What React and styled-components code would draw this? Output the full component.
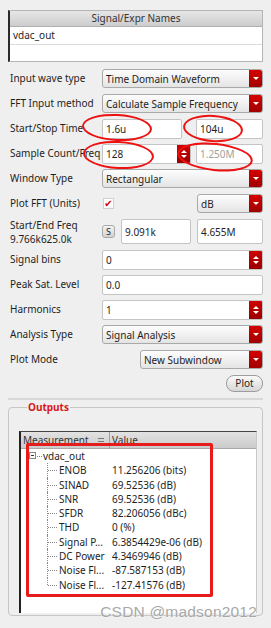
import styled, { createGlobalStyle } from 'styled-components';

const GlobalStyle = createGlobalStyle`
  body {
    margin: 0;
    background: #efefef;
    font-family: "Noto Sans", "DejaVu Sans", sans-serif;
    font-size: 10px;
    color: #1e1e1e;
  }
`;

const Page = styled.div`
  position: relative;
  width: 271px;
  height: 628px;
  box-sizing: border-box;
  padding: 10px 8px 0;
  overflow: hidden;
`;

const NamesPanel = styled.div`
  height: 52px;
  box-sizing: border-box;
  background: #fff;
  border: 1px solid #b5b5b5;
  border-left: 2px solid #2a2a2a;
`;

const NamesHeader = styled.div`
  height: 15px;
  line-height: 15px;
  text-align: center;
  background: linear-gradient(#e6e6e6, #cdcdcd);
  border-bottom: 1px solid #b0b0b0;
  color: #333;
`;

const NameRow = styled.div`
  height: 17px;
  line-height: 17px;
  padding-left: 3px;
  border-bottom: 1px solid #dcdcdc;
`;

const Form = styled.div`
  margin-top: 4px;
  display: flex;
  flex-direction: column;
`;

const Row = styled.div`
  display: grid;
  grid-template-columns: 94px 1fr;
  align-items: center;
  height: ${p => p.$h || 25}px;
`;

const Label = styled.div`
  padding-left: 2px;
  line-height: 19px;
  white-space: nowrap;
`;

const Combo = styled.div`
  height: 19px;
  margin-left: ${p => p.$offset || 0}px;
  box-sizing: border-box;
  display: flex;
  align-items: center;
  padding-left: 3px;
  border: 1px solid #a9a9a9;
  border-radius: 3px;
  background: linear-gradient(#fdfdfd, #e4e4e4);
  overflow: hidden;
  white-space: nowrap;
`;

const Arrow = styled.span`
  margin-left: auto;
  align-self: stretch;
  width: 13px;
  flex: none;
  display: flex;
  align-items: center;
  justify-content: center;
  background: linear-gradient(#d60000, #9e0000);
  &::after {
    content: '';
    border-left: 3px solid transparent;
    border-right: 3px solid transparent;
    border-top: 3px solid #fff;
  }
`;

const Input = styled.div`
  height: 20px;
  box-sizing: border-box;
  display: flex;
  align-items: center;
  padding-left: 3px;
  background: #fff;
  border: 1px solid #c4c4c4;
  border-radius: 2px;
  color: ${p => (p.$disabled ? '#a0a0a0' : '#1e1e1e')};
  overflow: hidden;
  white-space: nowrap;
`;

const Spinner = styled.span`
  margin-left: auto;
  align-self: stretch;
  width: 13px;
  flex: none;
  display: flex;
  flex-direction: column;
  align-items: center;
  justify-content: center;
  gap: 2px;
  background: linear-gradient(#d00000, #9a0000);
  &::before {
    content: '';
    border-left: 3px solid transparent;
    border-right: 3px solid transparent;
    border-bottom: 3px solid #fff;
  }
  &::after {
    content: '';
    border-left: 3px solid transparent;
    border-right: 3px solid transparent;
    border-top: 3px solid #fff;
  }
`;

const Pair = styled.div`
  display: grid;
  grid-template-columns: ${p => p.$cols};
  column-gap: ${p => p.$gap}px;
  align-items: center;
`;

const CheckBox = styled.span`
  width: 9px;
  height: 9px;
  margin-left: 1px;
  border: 1px solid #cfcfcf;
  background: #fff;
  color: #d00000;
  font-size: 10px;
  line-height: 8px;
  font-weight: bold;
  display: flex;
  justify-content: center;
`;

const SmallButton = styled.span`
  width: 13px;
  height: 13px;
  box-sizing: border-box;
  display: flex;
  align-items: center;
  justify-content: center;
  border: 1px solid #a8a8a8;
  border-radius: 3px;
  background: linear-gradient(#f4f4f4, #d2d2d2);
  font-size: 9px;
`;

const FreqFields = styled.div`
  display: flex;
  align-items: center;
  gap: 6px;
  & > ${Input} {
    height: 25px;
  }
`;

const TwoLine = styled.div`
  padding-left: 2px;
  line-height: 14px;
`;

const PlotRow = styled.div`
  height: 22px;
  display: flex;
  align-items: center;
  justify-content: flex-end;
`;

const PlotButton = styled.span`
  width: 37px;
  height: 17px;
  box-sizing: border-box;
  display: flex;
  align-items: center;
  justify-content: center;
  border: 1px solid #9d9d9d;
  border-radius: 8px;
  background: linear-gradient(#fafafa, #d6d6d6);
`;

const Separator = styled.div`
  margin-top: 4px;
  height: 2px;
  background: #d8d8d8;
`;

const Group = styled.fieldset`
  margin: 0;
  padding: 0 5px 0 10px;
  height: 216px;
  box-sizing: border-box;
  border: 1px solid #c6c6c6;
  border-radius: 4px;
`;

const Legend = styled.legend`
  padding: 0 1px;
  margin-left: 8px;
  color: #d81818;
  font-weight: bold;
  font-size: 10px;
`;

const Tree = styled.div`
  margin-top: 17px;
  height: 182px;
  box-sizing: border-box;
  background: #fff;
  border-top: 1px solid #444;
  border-left: 2px solid #222;
  border-right: 1px solid #c8c8c8;
`;

const TreeHeader = styled.div`
  display: grid;
  grid-template-columns: 89px 1fr;
  height: 16px;
  background: linear-gradient(#e2e2e2, #cbcbcb);
  border-bottom: 1px solid #aaa;
  color: #333;
`;

const HeadCell = styled.div`
  display: flex;
  align-items: center;
  padding-left: 2px;
  border-right: ${p => (p.$divider ? '1px solid #a0a0a0' : 'none')};
`;

const SortMark = styled.span`
  margin-left: auto;
  margin-right: 5px;
  width: 6px;
  border-top: 1px solid #777;
  border-bottom: 1px solid #777;
  height: 2px;
`;

const TreeRow = styled.div`
  display: grid;
  grid-template-columns: 91px 1fr;
  height: 14.3px;
  line-height: 14.3px;
  white-space: nowrap;
`;

const NameCell = styled.div`
  display: flex;
  align-items: stretch;
`;

const Expander = styled.span`
  margin: 3px 0 0 8px;
  width: 7px;
  height: 7px;
  box-sizing: border-box;
  border: 1px solid #888;
  display: flex;
  align-items: center;
  justify-content: center;
  &::after {
    content: '';
    width: 3px;
    border-top: 1px solid #333;
  }
`;

const RootDots = styled.span`
  width: 5px;
  margin: 0 1px 0 1px;
  align-self: center;
  border-top: 1px dotted #888;
`;

const Connector = styled.span`
  position: relative;
  margin-left: 26px;
  width: 10px;
  height: ${p => (p.$last ? '50%' : '100%')};
  border-left: 1px dotted #888;
  margin-right: 1px;
  &::after {
    content: '';
    position: absolute;
    left: 0;
    top: 7px;
    width: 9px;
    border-top: 1px dotted #888;
  }
`;

const Ellipse = styled.div`
  position: absolute;
  border: 2px solid #ee1111;
  border-radius: 50%;
  transform: rotate(${p => p.$tilt || 0}deg);
`;

const RedFrame = styled.div`
  position: absolute;
  left: 26px;
  top: 443px;
  width: 187px;
  height: 154px;
  box-sizing: border-box;
  border: 3px solid #e51c1c;
  border-radius: 2px;
`;

const Watermark = styled.div`
  position: absolute;
  right: 14px;
  top: 603px;
  font-family: "Liberation Sans", Arial, sans-serif;
  font-size: 15.5px;
  color: #a8a8a8;
  letter-spacing: 0.2px;
  text-shadow: 0 0 2px #fff;
`;

const measurements = [
  ['ENOB', '11.256206 (bits)'],
  ['SINAD', '69.52536 (dB)'],
  ['SNR', '69.52536 (dB)'],
  ['SFDR', '82.206056 (dBc)'],
  ['THD', '0 (%)'],
  ['Signal P...', '6.3854429e-06 (dB)'],
  ['DC Power', '4.3469946 (dB)'],
  ['Noise Fl...', '-87.587153 (dB)'],
  ['Noise Fl...', '-127.41576 (dB)'],
];

const Dropdown = ({ children, offset }) => (
  <Combo $offset={offset}>
    {children}
    <Arrow />
  </Combo>
);

export default function App() {
  return (
    <Page>
      <GlobalStyle />
      <NamesPanel>
        <NamesHeader>Signal/Expr Names</NamesHeader>
        <NameRow>vdac_out</NameRow>
      </NamesPanel>

      <Form>
        <Row>
          <Label>Input wave type</Label>
          <Dropdown>Time Domain Waveform</Dropdown>
        </Row>
        <Row>
          <Label>FFT Input method</Label>
          <Dropdown>Calculate Sample Frequency</Dropdown>
        </Row>
        <Row>
          <Label>Start/Stop Time</Label>
          <Pair $cols="80px 1fr" $gap={14}>
            <Input>1.6u</Input>
            <Input>104u</Input>
          </Pair>
        </Row>
        <Row>
          <Label>Sample Count/Freq</Label>
          <Pair $cols="89px 1fr" $gap={5}>
            <Input>
              128
              <Spinner />
            </Input>
            <Input $disabled>1.250M</Input>
          </Pair>
        </Row>
        <Row>
          <Label>Window Type</Label>
          <Dropdown>Rectangular</Dropdown>
        </Row>
        <Row>
          <Label>Plot FFT (Units)</Label>
          <Pair $cols="89px 1fr" $gap={6}>
            <CheckBox>✔</CheckBox>
            <Dropdown>dB</Dropdown>
          </Pair>
        </Row>
        <Row $h={31}>
          <TwoLine>
            Start/End Freq
            <br />
            9.766k625.0k
          </TwoLine>
          <FreqFields>
            <SmallButton>S</SmallButton>
            <Input style={{ width: 70 }}>9.091k</Input>
            <Input style={{ flex: 1 }}>4.655M</Input>
          </FreqFields>
        </Row>
        <Row>
          <Label>Signal bins</Label>
          <Input>
            0
            <Spinner />
          </Input>
        </Row>
        <Row>
          <Label>Peak Sat. Level</Label>
          <Input>0.0</Input>
        </Row>
        <Row>
          <Label>Harmonics</Label>
          <Input>
            1
            <Spinner />
          </Input>
        </Row>
        <Row>
          <Label>Analysis Type</Label>
          <Dropdown>Signal Analysis</Dropdown>
        </Row>
        <Row>
          <Label>Plot Mode</Label>
          <Dropdown offset={38}>New Subwindow</Dropdown>
        </Row>
        <PlotRow>
          <PlotButton>Plot</PlotButton>
        </PlotRow>
      </Form>

      <Separator />

      <Group>
        <Legend>Outputs</Legend>
        <Tree>
          <TreeHeader>
            <HeadCell $divider>
              Measurement
              <SortMark />
            </HeadCell>
            <HeadCell>Value</HeadCell>
          </TreeHeader>
          <TreeRow>
            <NameCell>
              <Expander />
              <RootDots />
              vdac_out
            </NameCell>
            <div />
          </TreeRow>
          {measurements.map(([name, value], i) => (
            <TreeRow key={i}>
              <NameCell>
                <Connector $last={i === measurements.length - 1} />
                {name}
              </NameCell>
              <div>{value}</div>
            </TreeRow>
          ))}
        </Tree>
      </Group>

      <Ellipse style={{ left: 82, top: 114, width: 66, height: 23 }} $tilt={3} />
      <Ellipse style={{ left: 183, top: 115, width: 56, height: 23 }} $tilt={4} />
      <Ellipse style={{ left: 83, top: 141, width: 67, height: 24 }} $tilt={3} />
      <Ellipse style={{ left: 177, top: 143, width: 72, height: 24 }} $tilt={6} />
      <RedFrame />
      <Watermark>CSDN @madson2012</Watermark>
    </Page>
  );
}
